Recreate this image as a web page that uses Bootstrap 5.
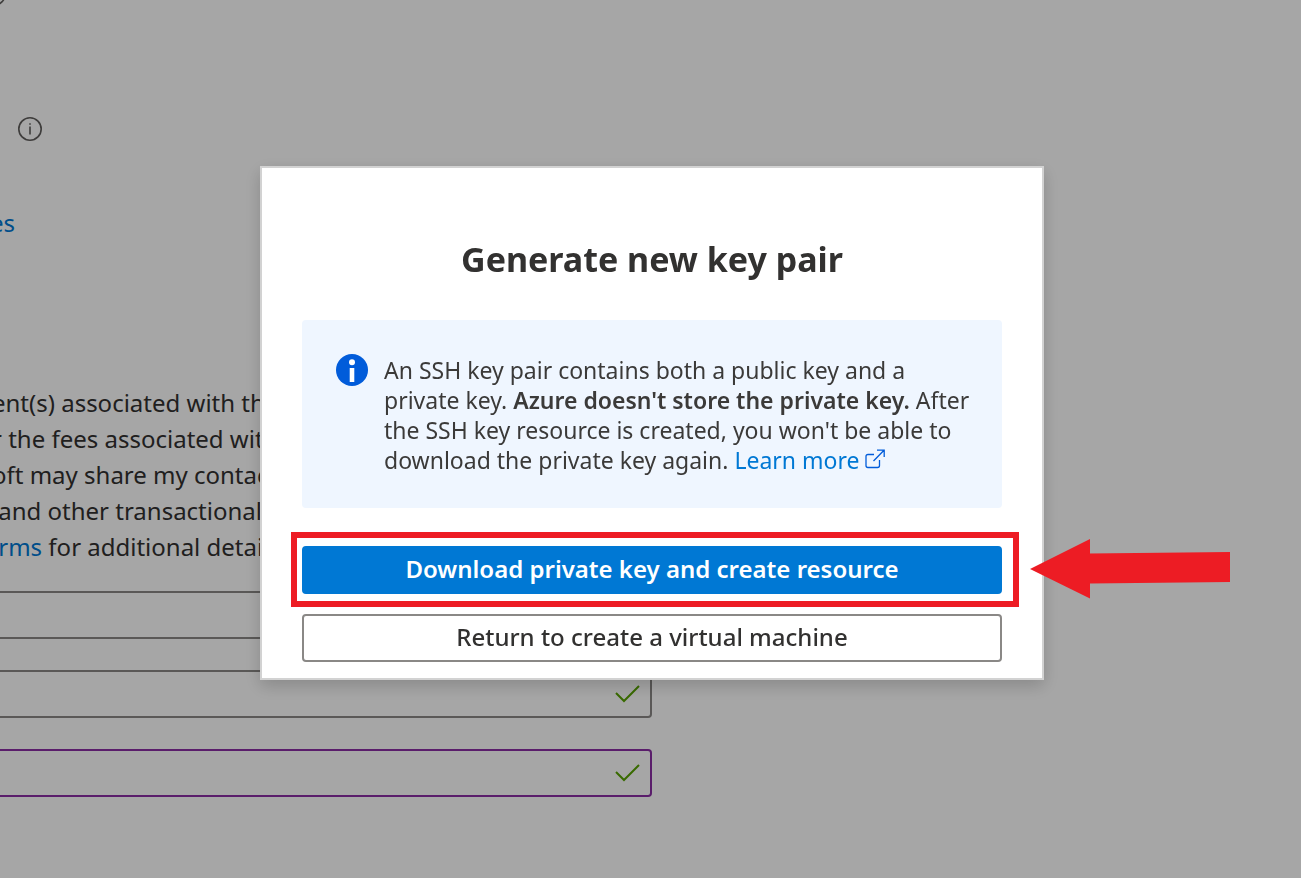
<!DOCTYPE html>
<html lang="en">
<head>
<meta charset="utf-8">
<meta name="viewport" content="width=device-width, initial-scale=1">
<title>Generate new key pair</title>
<link href="https://cdn.jsdelivr.net/npm/bootstrap@5.3.0/dist/css/bootstrap.min.css" rel="stylesheet">
<style>
body { font-family: "Noto Sans", "Open Sans", sans-serif; color: #323130; background: #fff; }
a { color: #0078d4; text-decoration: none; }
.form-page { min-height: 100vh; font-size: 24px; line-height: 36px; }
.info-ring { display: block; width: 24px; height: 24px; color: #605e5c; }
.ring-cut { margin: -18px 0 0 -18px; }
.ring-row { margin: 111px 0 0 18px; }
.sizes-link { margin: 64px 0 0 -10px; }
.terms { margin: 144px 0 0 -8px; white-space: pre; }
.fields { width: 652px; max-width: 100%; margin-top: 26px; gap: 31px; }
.field-box { height: 48px; border: 2px solid #8a8886; border-left: 0; border-radius: 0 4px 4px 0; box-shadow: none; }
.field-box.changed { border-color: #8a2da5; }
.field-check { position: absolute; right: 12px; top: 13px; width: 26px; height: 20px; }
.veil { position: fixed; inset: 0; background: rgba(0,0,0,.35); padding-top: 166px; padding-left: 3px; }
.key-dialog { width: 784px; max-width: 100%; border: 2px solid #d2d2d2; padding: 63px 40px 16px; box-shadow: 0 6px 16px rgba(0,0,0,.18); }
.key-dialog h1 { font-size: 34px; line-height: 56px; font-weight: 700; margin-bottom: 33px; }
.notice { background: #eff6ff; border-radius: 4px; padding: 34px 32px 33px 34px; gap: 16px; }
.notice p { font-size: 23px; line-height: 30px; padding-top: 1px; white-space: nowrap; color: #3b3a39; }
.notice strong { font-weight: 600; }
.notice-icon { width: 32px; height: 32px; }
.out-icon { width: 20px; height: 20px; }
.actions { margin-top: 38px; gap: 20px; }
.action { height: 48px; border: 2px solid #8a8886; border-radius: 4px; padding: 0 16px 2px; font-size: 24px; line-height: 40px; color: #323130; font-weight: 500; }
.action-main { background: #0078d4; border-color: #0078d4; color: #fff; font-weight: 600; }
.callout-frame { position: absolute; inset: -14px -17px -13px -11px; border: 6px solid #ed1c24; pointer-events: none; }
.callout-arrow { position: absolute; left: calc(100% + 28px); top: -7px; width: 200px; height: 60px; }
</style>
</head>
<body>
<main class="form-page overflow-hidden">
  <svg class="info-ring ring-cut" viewBox="0 0 24 24" fill="none" stroke="currentColor" aria-hidden="true"><circle cx="12" cy="12" r="11.2" stroke-width="1.6"/></svg>
  <svg class="info-ring ring-row" viewBox="0 0 24 24" fill="none" stroke="currentColor" aria-hidden="true"><circle cx="12" cy="12" r="11.2" stroke-width="1.6"/><path d="M12 9.500v8M12 6.200v1.500" stroke-width="1.600"/></svg>
  <div class="sizes-link"><a href="#">es</a></div>
  <p class="terms mb-0">ent(s) associated with the
r the fees associated with
oft may share my contact
 and other transactional
 <a href="#">rms</a> for additional details.</p>
  <div class="fields d-flex flex-column">
    <input class="form-control field-box" type="text" aria-label="Name">
    <div class="position-relative">
      <input class="form-control field-box" type="text" aria-label="Email">
      <svg class="field-check" viewBox="0 0 26 20" fill="none" stroke="#57a300" stroke-width="2" aria-hidden="true"><path d="M2 10l8 8L25 3"/></svg>
    </div>
    <div class="position-relative">
      <input class="form-control field-box changed" type="text" aria-label="Phone">
      <svg class="field-check" viewBox="0 0 26 20" fill="none" stroke="#57a300" stroke-width="2" aria-hidden="true"><path d="M2 10l8 8L25 3"/></svg>
    </div>
  </div>
</main>

<div class="veil">
  <section class="key-dialog bg-white mx-auto" role="dialog" aria-labelledby="dialog-title">
    <h1 id="dialog-title" class="text-center">Generate new key pair</h1>
    <div class="notice d-flex align-items-start">
      <svg class="notice-icon flex-shrink-0" viewBox="0 0 32 32" aria-hidden="true"><circle cx="16" cy="16" r="16" fill="#015cda"/><circle cx="16" cy="8.300" r="3" fill="#fff"/><path d="M13.700 14h4.600v14h-4.600z" fill="#fff"/></svg>
      <p class="mb-0">An SSH key pair contains both a public key and a<br>private key. <strong>Azure doesn't store the private key.</strong> After<br>the SSH key resource is created, you won't be able to<br>download the private key again. <a href="#">Learn more <svg class="out-icon align-baseline" viewBox="0 0 20 20" fill="none" stroke="#015cda" stroke-width="1.300" aria-hidden="true"><path d="M9 5.500H3Q1 5.500 1 7.500V16.500Q1 18.500 3 18.500H12.500Q14.500 18.500 14.500 16.500V11M8.500 12L19 1.200M12 1.200H19.200V8"/></svg></a></p>
    </div>
    <div class="actions d-flex flex-column">
      <div class="position-relative">
        <button type="button" class="btn action action-main w-100 d-block">Download private key and create resource</button>
        <div class="callout-frame"></div>
        <svg class="callout-arrow" viewBox="0 0 200 60" aria-hidden="true"><path d="M0 30L60 0V14.500L200 13V43L60 44.500V59.500Z" fill="#ed1c24"/></svg>
      </div>
      <button type="button" class="btn action w-100">Return to create a virtual machine</button>
    </div>
  </section>
</div>
<script src="https://cdn.jsdelivr.net/npm/bootstrap@5.3.0/dist/js/bootstrap.bundle.min.js"></script>
</body>
</html>
